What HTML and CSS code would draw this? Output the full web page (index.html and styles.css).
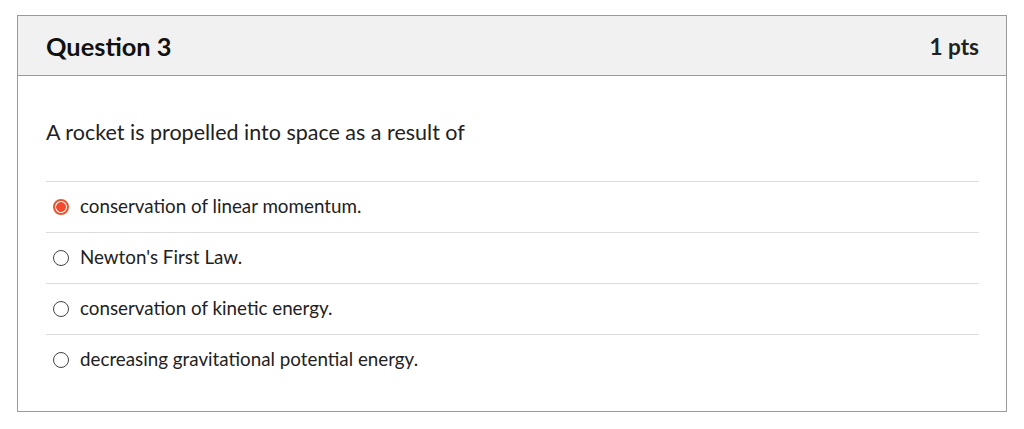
FILE: index.html
```html
<!DOCTYPE html>
<html>
<head>
<meta charset="utf-8">
<link rel="stylesheet" href="styles.css">
</head>
<body>
<div class="card">
  <div class="card-header">
    <h2 class="title">Question 3</h2>
    <div class="pts">1 pts</div>
  </div>
  <div class="card-body">
    <p class="question">A rocket is propelled into space as a result of</p>
    <ul class="answers">
      <li class="answer"><span class="radio checked"></span><span class="label">conservation of linear momentum.</span></li>
      <li class="answer"><span class="radio"></span><span class="label">Newton's First Law.</span></li>
      <li class="answer"><span class="radio"></span><span class="label">conservation of kinetic energy.</span></li>
      <li class="answer"><span class="radio"></span><span class="label">decreasing gravitational potential energy.</span></li>
    </ul>
  </div>
</div>
</body>
</html>
```
FILE: styles.css
```css
html, body {
  margin: 0;
  padding: 0;
  background: #fff;
}
body {
  padding: 15px 0 0 17px;
  font-family: Lato, "Liberation Sans", sans-serif;
  color: #2d3b45;
}
.card {
  width: 988px;
  border: 1px solid #9a9a9a;
  box-sizing: content-box;
}
.card-header {
  height: 59px;
  background: #f1f1f1;
  border-bottom: 1px solid #9a9a9a;
  display: flex;
  align-items: center;
  justify-content: space-between;
  padding: 0 27px 0 28px;
}
.title {
  margin: 0;
  font-size: 25.4px;
  line-height: 30px;
  font-weight: 700;
  color: #111;
}
.pts {
  font-size: 22.6px;
  line-height: 30px;
  font-weight: 700;
  color: #222;
  position: relative;
  top: 1px;
}
.card-body {
  padding: 0 27px 26px 28px;
}
.question {
  margin: 0;
  padding-top: 42px;
  height: 105px;
  box-sizing: border-box;
  font-size: 21.5px;
  line-height: 28px;
  color: #222;
}
.answers {
  list-style: none;
  margin: 0;
  padding: 0;
}
.answer {
  height: 51px;
  box-sizing: border-box;
  border-top: 1px solid #dcdcdc;
  display: flex;
  align-items: center;
  padding-left: 7px;
  padding-bottom: 2px;
  font-size: 18.8px;
  line-height: 24px;
  color: #222;
}
.radio {
  width: 14px;
  height: 14px;
  border: 1px solid #444;
  border-radius: 50%;
  margin-right: 11px;
  flex: none;
  background: #fff;
  box-sizing: content-box;
  position: relative;
  top: 1px;
}
.radio.checked {
  border: 2px solid #e8562f;
  width: 12px;
  height: 12px;
  background: radial-gradient(circle, #f14a2c 0 4.5px, #fff 5.2px);
}
```
